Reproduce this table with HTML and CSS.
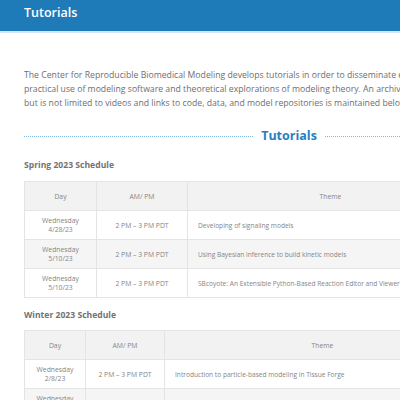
FILE: index.html
```html
<!DOCTYPE html>
<html lang="en">
<head>
<meta charset="utf-8">
<title>Tutorials</title>
<link rel="stylesheet" href="styles.css">
</head>
<body>
<header class="banner">
  <h1 class="banner-title">Tutorials</h1>
</header>
<main class="content">
  <p class="intro">The Center for Reproducible Biomedical Modeling develops tutorials in order to disseminate educational material on the<br>practical use of modeling software and theoretical explorations of modeling theory. An archive of our tutorials, including<br>but is not limited to videos and links to code, data, and model repositories is maintained below.</p>
  <h2 class="section-title"><span>Tutorials</span></h2>

  <h3 class="schedule-title">Spring 2023 Schedule</h3>
  <table class="schedule spring">
    <colgroup><col class="c-day"><col class="c-time"><col class="c-theme"></colgroup>
    <thead><tr><th>Day</th><th>AM/ PM</th><th>Theme</th></tr></thead>
    <tbody>
      <tr><td class="day">Wednesday<br>4/28/23</td><td class="time">2 PM – 3 PM PDT</td><td class="theme">Developing of signaling models</td></tr>
      <tr><td class="day">Wednesday<br>5/10/23</td><td class="time">2 PM – 3 PM PDT</td><td class="theme">Using Bayesian inference to build kinetic models</td></tr>
      <tr><td class="day">Wednesday<br>5/10/23</td><td class="time">2 PM – 3 PM PDT</td><td class="theme">SBcoyote: An Extensible Python-Based Reaction Editor and Viewer</td></tr>
    </tbody>
  </table>

  <h3 class="schedule-title">Winter 2023 Schedule</h3>
  <table class="schedule winter">
    <colgroup><col class="c-day"><col class="c-time"><col class="c-theme"></colgroup>
    <thead><tr><th>Day</th><th>AM/ PM</th><th>Theme</th></tr></thead>
    <tbody>
      <tr><td class="day">Wednesday<br>2/8/23</td><td class="time">2 PM – 3 PM PDT</td><td class="theme">Introduction to particle-based modeling in Tissue Forge</td></tr>
      <tr><td class="day">Wednesday<br>2/15/23</td><td class="time">2 PM – 3 PM PST</td><td class="theme">Introduction to parameter estimation and uncertainty quantification</td></tr>
    </tbody>
  </table>
</main>
</body>
</html>
```

FILE: styles.css
```css
html, body {
  margin: 0;
  padding: 0;
  background: #ffffff;
  overflow: hidden;
}
body {
  font-family: "Open Sans", "DejaVu Sans", sans-serif;
  color: #777777;
  width: 600px;
}
.banner {
  background: #1f7bb8;
  height: 31px;
  border-bottom: 2px solid #d3e6f3;
  display: flex;
  align-items: center;
  padding-left: 24px;
}
.banner-title {
  margin: 0;
  font-size: 12.5px;
  font-weight: 600;
  color: #ffffff;
  line-height: 1;
  position: relative;
  top: -2px;
}
.content {
  width: 530px;
  padding: 0 0 0 24px;
}
.intro {
  margin: 35px 0 0;
  font-size: 8.7px;
  line-height: 14px;
  color: #6e6e6e;
  white-space: nowrap;
}
.section-title {
  display: flex;
  align-items: center;
  gap: 8px;
  margin: 18px 0 0;
  font-size: 12.5px;
  line-height: 16px;
  font-weight: 700;
  color: #2580c3;
}
.section-title::before,
.section-title::after {
  content: "";
  flex: 1;
  border-top: 1px dotted #7fb6e0;
}
.schedule-title {
  margin: 15px 0 0;
  font-size: 8.6px;
  line-height: 12px;
  font-weight: 700;
  color: #737373;
}
.schedule {
  margin-top: 10px;
  border-collapse: collapse;
  table-layout: fixed;
  font-size: 6.8px;
  color: #858585;
}
.winter { margin-top: 9px; }
.spring + .schedule-title { margin-top: 11px; }
.spring .c-day { width: 72px; }
.spring .c-time { width: 91px; }
.spring .c-theme { width: 286px; }
.winter .c-day { width: 61px; }
.winter .c-time { width: 79px; }
.winter .c-theme { width: 316px; }
.schedule th,
.schedule td {
  border: 1px solid #e4e4e4;
  height: 28px;
  padding: 0 10px;
  line-height: 9px;
  text-align: center;
  vertical-align: middle;
  font-weight: 400;
}
.schedule thead th { background: #f2f2f2; }
.schedule tbody tr:nth-child(even) td { background: #f5f5f5; }
.schedule td.theme { text-align: left; font-size: 6.6px; }
```
